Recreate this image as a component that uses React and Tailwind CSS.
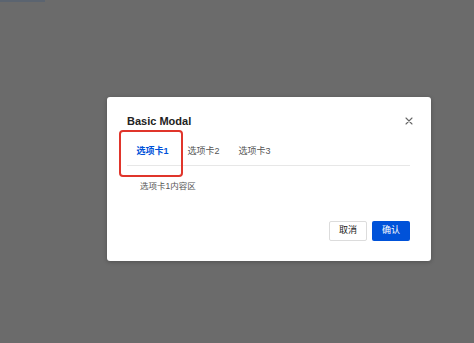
export default function App() {
  const tabs = ["选项卡1", "选项卡2", "选项卡3"];
  const font = { fontFamily: '"Liberation Sans", "Noto Sans CJK SC", sans-serif' };

  return (
    <div className="w-[474px] h-[343px] bg-[#6b6b6b] overflow-hidden" style={font}>
      <div className="w-[45px] h-[2px] bg-[#5b6470]" />
      <div className="ml-[107px] mt-[95px] w-[324px] h-[164px] bg-white rounded-[3px] shadow-[0_1px_4px_rgba(0,0,0,0.25)] pl-[20px] pr-[21px] pt-[16px] pb-[20px] flex flex-col">
        {/* Header */}
        <div className="flex items-center justify-between h-[16px]">
          <span className="text-[11px] leading-[16px] font-semibold text-[#222]">Basic Modal</span>
          <svg width="8" height="8" viewBox="0 0 8 8" className="mr-[-3px]">
            <path d="M1 1L7 7M7 1L1 7" stroke="#666" strokeWidth="1.1" strokeLinecap="round" />
          </svg>
        </div>

        {/* Tabs */}
        <div className="relative mt-[8px] flex h-[29px] border-b border-[#e7e7e7]">
          {tabs.map((t, i) => (
            <div
              key={t}
              className={
                "px-[9.5px] flex items-center text-[9px] leading-[14px] " +
                (i === 0 ? "text-[#0052d9] font-semibold" : "text-[#555]")
              }
            >
              {t}
            </div>
          ))}
          <div className="absolute left-[-8px] top-[-7px] w-[64px] h-[47px] border-2 border-[#e0352b] rounded-[4px]" />
        </div>

        {/* Content */}
        <div className="mt-[13px] pl-[13px] text-[8.5px] leading-[14px] text-[#555]">选项卡1内容区</div>

        {/* Footer */}
        <div className="mt-auto flex justify-end gap-[5px]">
          <button className="w-[38px] h-[20px] border border-[#dcdcdc] rounded-[2px] bg-white text-[9px] text-[#222]">
            取消
          </button>
          <button className="w-[38px] h-[20px] rounded-[2px] bg-[#0052d9] text-[9px] text-white">
            确认
          </button>
        </div>
      </div>
    </div>
  );
}
